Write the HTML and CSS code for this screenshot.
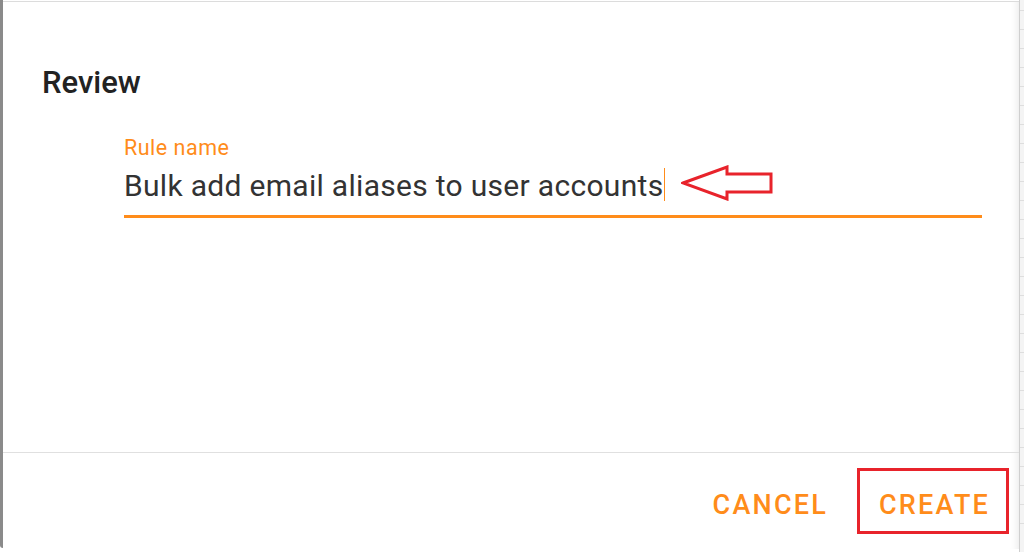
FILE: index.html
```html
<!DOCTYPE html>
<html lang="en">
<head>
  <meta charset="UTF-8" />
  <meta name="viewport" content="width=device-width, initial-scale=1.0"/>
  <title>Review</title>
  <link rel="stylesheet" href="styles.css">
</head>
<body>
  <div class="screen">
    <div class="backdrop-left"></div>

    <div class="dialog">
      <h2 class="dialog-title">Review</h2>

      <div class="dialog-body">
        <div class="field">
          <label class="field-label">Rule name</label>
          <div class="field-input">
            <span class="field-value">Bulk add email aliases to user accounts</span>
            <span class="caret"></span>
            <!-- annotation arrow -->
            <svg class="pointer" width="92" height="36" viewBox="0 0 92 36">
              <polygon points="2,18 46,2 46,9 90,9 90,27 46,27 46,34" fill="none" stroke="#e8232b" stroke-width="3" stroke-linejoin="miter"/>
            </svg>
          </div>
        </div>
      </div>

      <div class="dialog-actions">
        <button class="btn">Cancel</button>
        <button class="btn btn-marked">Create</button>
      </div>
    </div>

    <div class="backdrop-right">
      <span></span><span></span><span></span><span></span><span></span>
      <span></span><span></span><span></span><span></span><span></span>
      <span></span><span></span><span></span><span></span><span></span>
      <span></span><span></span><span></span><span></span><span></span>
      <span></span><span></span><span></span><span></span><span></span>
      <span></span><span></span><span></span>
    </div>
  </div>
</body>
</html>
```

FILE: styles.css
```css
body {
  margin: 0;
  background: #fff;
  font-family: Roboto, 'Liberation Sans', sans-serif;
}

.screen {
  display: flex;
  width: 1024px;
  height: 552px;
  overflow: hidden;
}

.backdrop-left {
  width: 3px;
  height: 548px;
  background: #8a8a8a;
  border-bottom-left-radius: 3px;
}

.dialog {
  flex: 1;
  display: flex;
  flex-direction: column;
  height: 547px;
  margin-top: 1px;
  border-top: 1px solid #dcdcdc;
  background: #fff;
  box-shadow: inset -10px 0 10px -10px rgba(0, 0, 0, 0.12);
}

.dialog-title {
  margin: 63px 0 0 39px;
  font-size: 31px;
  line-height: 36px;
  font-weight: 500;
  color: #222;
}

.dialog-body {
  flex: 1;
  padding: 35px 37px 0 121px;
}

.field-label {
  display: block;
  font-size: 21.5px;
  line-height: 24px;
  color: #ff8c1a;
  letter-spacing: 0.5px;
}

.field-input {
  display: flex;
  align-items: flex-start;
  margin-top: 8px;
  padding-bottom: 11px;
  border-bottom: 3px solid #ff8c1a;
}

.field-value {
  font-size: 30px;
  line-height: 36px;
  letter-spacing: 0.3px;
  color: #333;
}

.caret {
  width: 1px;
  height: 33px;
  margin-left: 1px;
  background: #ff8c1a;
}

.pointer {
  margin: -3px 0 0 16px;
}

.dialog-actions {
  display: flex;
  justify-content: flex-end;
  gap: 10px;
  padding: 15px 10px 15px 0;
  border-top: 1px solid #e0e0e0;
}

.btn {
  padding: 18px 16px 10px 19px;
  border: 3px solid transparent;
  background: none;
  font-family: inherit;
  font-size: 27px;
  line-height: 32px;
  font-weight: 500;
  letter-spacing: 2.2px;
  text-transform: uppercase;
  color: #ff8c1a;
  cursor: pointer;
}

.btn-marked {
  border-color: #e8232b;
}

.backdrop-right {
  width: 4px;
  height: 552px;
  border-left: 1px solid #cfcfcf;
  background: #f4f4f4;
  display: flex;
  flex-direction: column;
  gap: 18px;
  padding-top: 10px;
}

.backdrop-right span {
  display: block;
  height: 1px;
  background: #dedede;
}
```
